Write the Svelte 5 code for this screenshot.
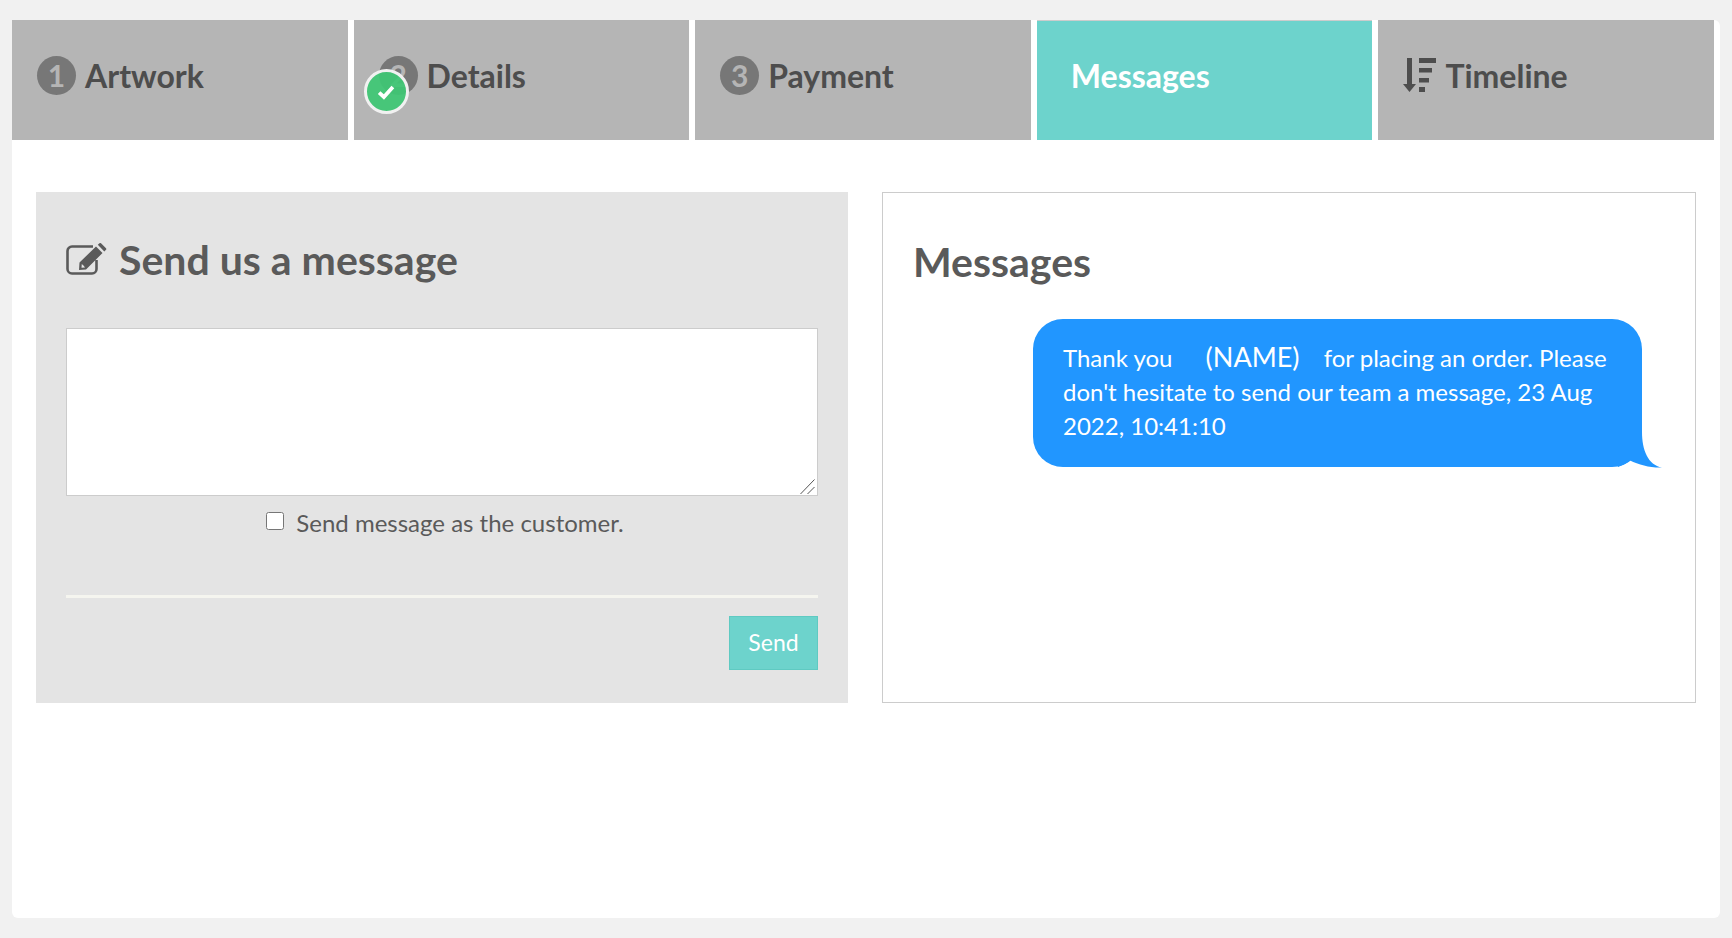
<script>
    const tabs = [
        { label: "Artwork", num: 1 },
        { label: "Details", num: 2, done: true },
        { label: "Payment", num: 3 },
        { label: "Messages", active: true },
        { label: "Timeline", sort: true },
    ];
</script>

<div class="card">
    <nav class="tabs">
        {#each tabs as tab}
            <div class="tab" class:active={tab.active}>
                {#if tab.num}
                    <span class="num">{tab.num}</span>
                {/if}
                {#if tab.sort}
                    <svg class="sort-icon" viewBox="0 0 33 34" width="33" height="34" aria-hidden="true">
                        <rect x="4" y="0" width="5" height="28" />
                        <polygon points="0,26 13,26 6.5,34" />
                        <rect x="16" y="0" width="17" height="5" />
                        <rect x="16" y="10" width="13" height="4.5" />
                        <rect x="16" y="20" width="10" height="4.5" />
                        <rect x="16" y="29" width="6" height="5" />
                    </svg>
                {/if}
                <span>{tab.label}</span>
                {#if tab.done}
                    <span class="badge">
                        <svg viewBox="0 0 16 16" width="20" height="20" aria-hidden="true">
                            <path d="M2.5 8.5 L6.3 12 L13.5 4" fill="none" stroke="#fff" stroke-width="3" />
                        </svg>
                    </span>
                {/if}
            </div>
        {/each}
    </nav>

    <div class="panels">
        <section class="panel compose">
            <h2>
                <svg class="edit-icon" viewBox="0 0 41 32" width="41" height="32" aria-hidden="true">
                    <path d="M27 3.5 H6 a4.5 4.5 0 0 0 -4.5 4.5 V26 a4.5 4.5 0 0 0 4.5 4.5 H26 a4.5 4.5 0 0 0 4.5 -4.5 V17" fill="none" stroke="#5a5a5a" stroke-width="2.6" />
                    <path d="M13.5 19.5 L30 3.5 L36.5 10 L20 26.5 L13 27 Z M15.8 21 L15.5 24.7 L19 24.4 L17.5 22.5 Z" fill="#5a5a5a" fill-rule="evenodd" />
                    <path d="M31.8 1.8 L33.5 0.2 Q34.3 -0.3 35 0.3 L40 5.2 Q40.6 6 40 6.8 L38.3 8.4 Z" fill="#5a5a5a" />
                </svg>
                Send us a message
            </h2>
            <div class="field">
                <textarea></textarea>
                <svg class="grip" viewBox="0 0 15 15" width="15" height="15" aria-hidden="true">
                    <path d="M0.5 15 L14.5 0.5 M7.5 15 L14.5 8" fill="none" stroke="#555" stroke-width="1" />
                </svg>
            </div>
            <label class="as-customer">
                <input type="checkbox" />
                <span>Send message as the customer.</span>
            </label>
            <hr />
            <div class="actions">
                <button type="button">Send</button>
            </div>
        </section>

        <section class="panel history">
            <h2>Messages</h2>
            <div class="bubble">
                <p>Thank you <span class="name">(NAME)</span> for placing an order. Please don't hesitate to send our team a message, 23 Aug 2022, 10:41:10</p>
                <svg class="tail" viewBox="0 0 44 36" width="44" height="36" aria-hidden="true">
                    <path d="M24 0 C24 18 30 33 44 35.5 C33 36 21 33 12 28.5 Q8 32 0 35 L0 0 Z" fill="#2196ff" />
                </svg>
            </div>
        </section>
    </div>
</div>

<style>
    :global(body) {
        background-color: #f1f1f1;
        font-family: "Lato", "Open Sans", sans-serif;
        color: #5a5a5a;
    }
    .card {
        box-sizing: border-box;
        height: 898px;
        margin: 20px 12px;
        background-color: #fff;
        border-radius: 0 6px 6px 6px;
    }
    .tabs {
        display: grid;
        grid-template-columns: repeat(5, 1fr);
        gap: 6px;
        height: 120px;
        margin-right: 6px;
    }
    .tab {
        position: relative;
        display: flex;
        align-items: center;
        gap: 9px;
        padding: 0 0 10px 25px;
        background-color: #b5b5b5;
        color: #4d4d4d;
        font-size: 32px;
        font-weight: 700;
    }
    .tab.active {
        padding-left: 34px;
        background-color: #6dd3cc;
        border-top: 1px solid #ccc;
        color: #fff;
    }
    .num {
        width: 39px;
        height: 39px;
        border-radius: 50%;
        background-color: #777;
        color: #b5b5b5;
        font-size: 30px;
        font-weight: 700;
        line-height: 39px;
        text-align: center;
    }
    .sort-icon {
        fill: #4d4d4d;
    }
    .badge {
        position: absolute;
        left: 10px;
        top: 49px;
        box-sizing: border-box;
        width: 45px;
        height: 45px;
        display: flex;
        align-items: center;
        justify-content: center;
        border: 3px solid #f1f1f1;
        border-radius: 50%;
        background-color: rgba(62, 200, 116, 0.92);
    }
    .panels {
        display: flex;
        gap: 34px;
        padding: 52px 24px 0;
    }
    .panel {
        box-sizing: border-box;
        flex: 1;
        height: 511px;
    }
    .compose {
        padding: 44px 30px 0;
        background-color: #e4e4e4;
    }
    .history {
        position: relative;
        padding: 45px 30px 0;
        border: 1px solid #ccc;
    }
    h2 {
        display: flex;
        align-items: center;
        gap: 12px;
        margin: 0;
        height: 46px;
        font-size: 41px;
        font-weight: 700;
        color: #5a5a5a;
    }
    .field {
        position: relative;
        margin-top: 46px;
    }
    textarea {
        display: block;
        box-sizing: border-box;
        width: 100%;
        height: 168px;
        margin: 0;
        border: 1px solid #ccc;
        background-color: #fff;
        resize: none;
    }
    .grip {
        position: absolute;
        right: 3px;
        bottom: 2px;
    }
    .as-customer {
        display: flex;
        align-items: center;
        justify-content: center;
        gap: 12px;
        margin-top: 13px;
        padding-left: 6px;
        font-size: 24px;
        line-height: 28px;
    }
    .as-customer input {
        width: 18px;
        height: 18px;
        margin: 0 0 4px;
    }
    hr {
        height: 3px;
        margin: 58px 0 0;
        border: 0;
        background-color: #f5f5ef;
    }
    .actions {
        display: flex;
        justify-content: flex-end;
        margin-top: 18px;
    }
    button {
        width: 89px;
        height: 54px;
        padding: 0 0 2px;
        border: 1px solid #5fcac2;
        background-color: #6dd3cc;
        color: #fff;
        font-family: inherit;
        font-size: 23px;
    }
    .bubble {
        position: relative;
        box-sizing: border-box;
        width: 609px;
        height: 148px;
        margin: 35px 0 0 120px;
        padding: 21px 30px;
        border-radius: 30px;
        background-color: #2196ff;
        color: #fff;
    }
    .bubble p {
        margin: 0;
        font-size: 24px;
        line-height: 34px;
    }
    .name {
        margin: 0 18px 0 27px;
        font-size: 27px;
    }
    .tail {
        position: absolute;
        right: -20px;
        bottom: -0.5px;
    }
</style>
